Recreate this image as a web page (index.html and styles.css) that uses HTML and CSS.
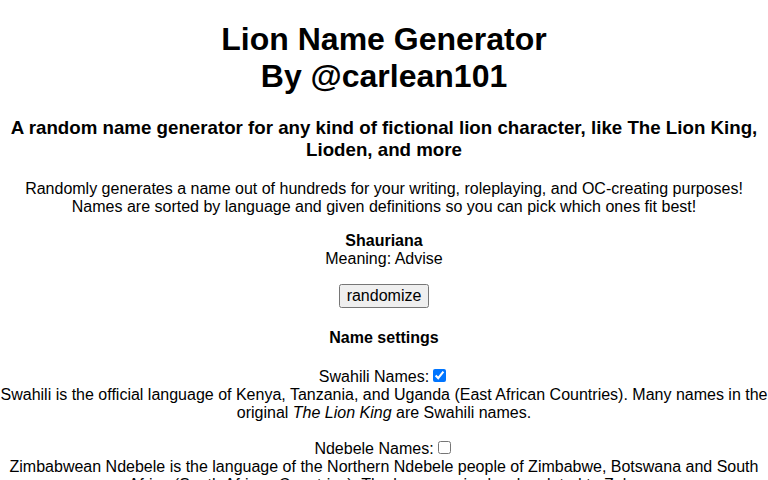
FILE: index.html
```html
<!DOCTYPE html>
<html>
	<head>
		<meta charset="UTF-8">
		<title>Lion Name Generator</title>
		<link rel="stylesheet" href="styles.css">
	</head>
	<body>
		<h1>Lion Name Generator<br>By @carlean101</h1>
		<h3>A random name generator for any kind of fictional lion character, like The Lion King, Lioden, and more</h3>
		<p>Randomly generates a name out of hundreds for your writing, roleplaying, and OC-creating purposes!<br>Names are sorted by language and given definitions so you can pick which ones fit best!</p>

		<!--名字结果-->
		<p class="result">
			<b id="name">Shauriana</b><br>
			Meaning: <span id="meaning">Advise</span>
		</p>
		<p><button id="btn">randomize</button></p>

		<h4>Name settings</h4>

		<p class="lang">
			<label for="swahili">Swahili Names:</label><input type="checkbox" id="swahili" checked><br>
			Swahili is the official language of Kenya, Tanzania, and Uganda (East African Countries). Many names in the original <i>The Lion King</i> are Swahili names.
		</p>
		<p class="lang">
			<label for="ndebele">Ndebele Names:</label><input type="checkbox" id="ndebele"><br>
			Zimbabwean Ndebele is the language of the Northern Ndebele people of Zimbabwe, Botswana and South Africa (South African Countries). The language is closely related to Zulu.
		</p>
	</body>
</html>
```

FILE: styles.css
```css
body{
	margin:0;
	font-family:"Liberation Sans", Arial, sans-serif;
	text-align:center;
	color:#000;
	background:#fff;
}

button{
	font-family:"Liberation Sans", Arial, sans-serif;
	font-size:16px;
}

h4{
	margin-bottom:19px;
}
```
